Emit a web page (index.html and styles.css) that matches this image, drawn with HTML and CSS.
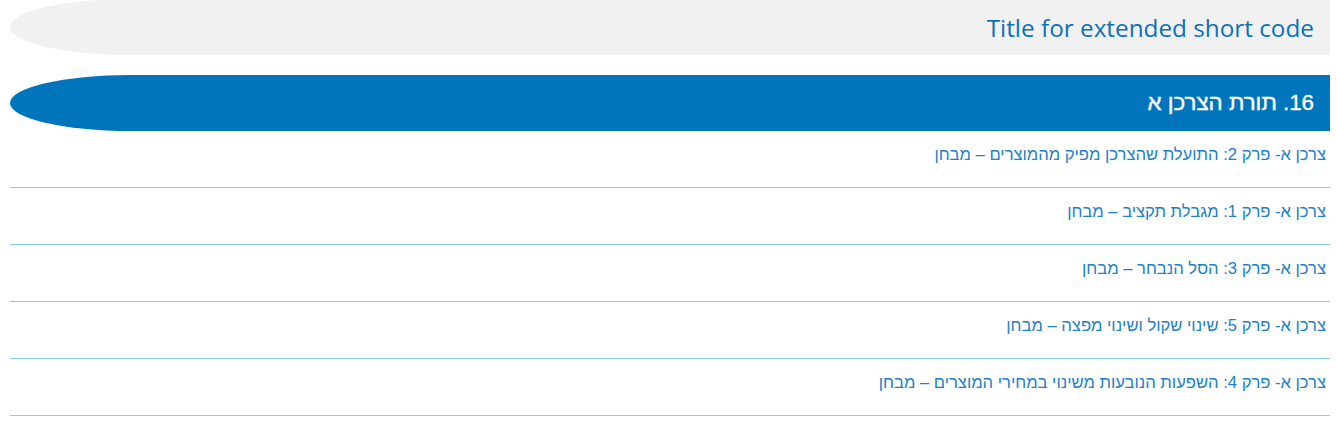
FILE: index.html
```html
<!DOCTYPE html>
<html lang="he">
<head>
<meta charset="utf-8">
<link rel="stylesheet" href="styles.css">
</head>
<body>
<div class="page">
  <div class="bar bar-gray"><h2 class="title-en">Title for extended short code</h2></div>
  <div class="bar bar-blue" dir="rtl"><h3 class="title-he">16. תורת הצרכן א</h3></div>
  <ul class="list" dir="rtl">
    <li class="item">צרכן א- פרק 2: התועלת שהצרכן מפיק מהמוצרים – מבחן</li>
    <li class="item">צרכן א- פרק 1: מגבלת תקציב – מבחן</li>
    <li class="item">צרכן א- פרק 3: הסל הנבחר – מבחן</li>
    <li class="item">צרכן א- פרק 5: שינוי שקול ושינוי מפצה – מבחן</li>
    <li class="item">צרכן א- פרק 4: השפעות הנובעות משינוי במחירי המוצרים – מבחן</li>
  </ul>
</div>
</body>
</html>
```
FILE: styles.css
```css
html, body { margin: 0; padding: 0; background: #fff; }
.page {
  margin: -1px 6px 0 10px;
  font-family: "Liberation Sans", Arial, sans-serif;
}
.bar {
  height: 56px;
  display: flex;
  align-items: center;
  justify-content: flex-end;
  padding: 0 16px;
  border-radius: 120px 0 0 120px / 28px 0 0 28px;
}
.bar-gray { background: #f1f1f1; }
.bar-blue { background: #0075bc; margin-top: 20px; justify-content: flex-start; }
.title-en {
  margin: 0;
  font-family: "Open Sans", sans-serif;
  font-weight: 400;
  font-size: 24.3px;
  color: #0a72b8;
}
.title-he {
  margin: 0;
  font-family: "Liberation Sans", Arial, sans-serif;
  font-weight: 400;
  font-size: 22.3px;
  color: #fff;
  -webkit-text-stroke: 0.4px #fff;
}
.list { list-style: none; margin: 0; padding: 0; }
.item {
  padding: 13px 4px 0 4px;
  box-sizing: border-box;
  height: 57px;
  border-bottom: 1px solid #86cbf5;
  font-size: 16.6px;
  line-height: 21px;
  color: #2281c6;
}
```
